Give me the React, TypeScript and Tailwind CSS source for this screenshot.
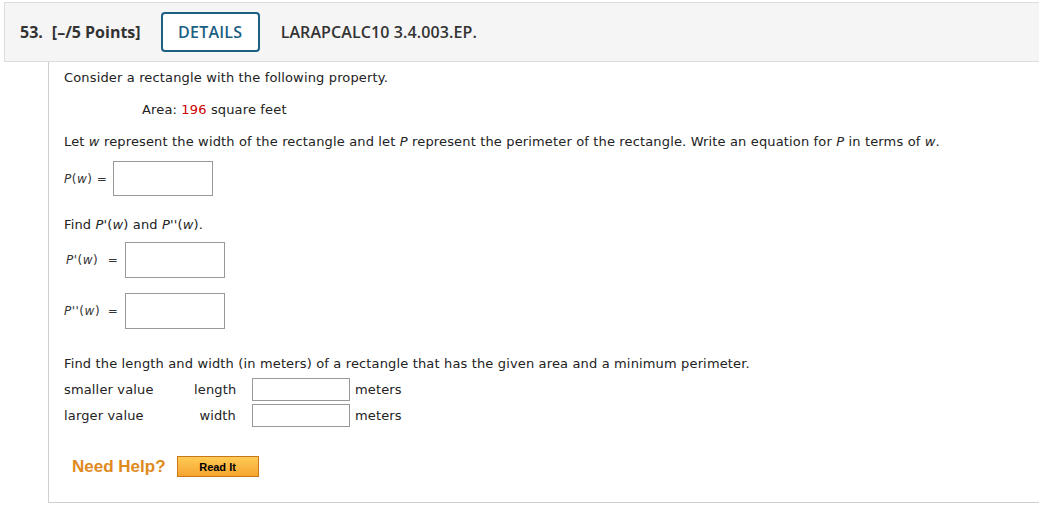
import React from 'react';

const body = "font-['DejaVu_Sans',Verdana,sans-serif] text-[13px] tracking-[0.15px] text-[#222]";

function Box({ className }: { className: string }) {
  return <div className={`border border-[#999] bg-white ${className}`} />;
}

function Label({ primes }: { primes: string }) {
  return (
    <span className="text-[12px] text-[#333] tracking-[0.5px]">
      <i>P</i>
      {primes}(<i>w</i>)
    </span>
  );
}

export default function App() {
  return (
    <div className={`min-h-screen bg-white ${body}`}>
      <div className="pt-[2px] pl-[4px]">
        {/* Question header */}
        <div className="flex items-center h-[60px] bg-[#f5f5f5] border border-r-0 border-[#dcdcdc] pl-[15px] font-['Open_Sans',sans-serif] font-bold text-[16px] tracking-normal text-[#333]">
          <span>53.</span>
          <span className="ml-[9px]">[–/5 Points]</span>
          <button className="ml-[20px] h-[40px] w-[99px] rounded-[4px] border-2 border-[#1b5f83] bg-white text-[#1b5f83] font-semibold text-[16px] tracking-[0.2px]">
            DETAILS
          </button>
          <span className="ml-[21px] font-semibold tracking-[0.1px]">LARAPCALC10 3.4.003.EP.</span>
        </div>

        {/* Question body */}
        <div className="ml-[44px] border-l border-b border-[#cfcfcf] pl-[15px] pt-[7px] pb-[22px]">
          <p className="leading-[18px]">Consider a rectangle with the following property.</p>
          <p className="mt-[14px] ml-[78px] leading-[18px]">
            Area: <span className="text-[#c00]">196</span> square feet
          </p>
          <p className="mt-[14px] leading-[18px]">
            Let <i>w</i> represent the width of the rectangle and let <i>P</i> represent the perimeter of the rectangle. Write an equation for <i>P</i> in terms of <i>w</i>.
          </p>

          <div className="mt-[10px] flex items-center">
            <span className="text-[12px] text-[#333] tracking-[0.5px] w-[49px]">
              <i>P</i>(<i>w</i>) =
            </span>
            <Box className="w-[100px] h-[35px]" />
          </div>

          <p className="mt-[20px] leading-[18px]">
            Find <i>P</i>'(<i>w</i>) and <i>P</i>''(<i>w</i>).
          </p>

          <div className="mt-[8px] flex items-center">
            <div className="w-[61px] flex justify-between pr-[7px] pl-[2px]">
              <Label primes="'" />
              <span className="text-[12px] text-[#333]">=</span>
            </div>
            <Box className="w-[100px] h-[36px]" />
          </div>

          <div className="mt-[15px] flex items-center">
            <div className="w-[61px] flex justify-between pr-[7px]">
              <Label primes="''" />
              <span className="text-[12px] text-[#333]">=</span>
            </div>
            <Box className="w-[100px] h-[36px]" />
          </div>

          <p className="mt-[26px] leading-[18px]">
            Find the length and width (in meters) of a rectangle that has the given area and a minimum perimeter.
          </p>

          <div className="mt-[5px] grid grid-cols-[130px_42px_100px_auto] items-center gap-y-[3px]">
            <span>smaller value</span>
            <span className="text-right">length</span>
            <Box className="ml-[16px] w-[98px] h-[23px]" />
            <span className="ml-[19px]">meters</span>
            <span>larger value</span>
            <span className="text-right">width</span>
            <Box className="ml-[16px] w-[98px] h-[23px]" />
            <span className="ml-[19px]">meters</span>
          </div>

          <div className="mt-[27px] ml-[8px] flex items-center">
            <span className="font-['Liberation_Sans',Arial,sans-serif] font-bold text-[17px] tracking-normal text-[#e08a1e]">
              Need Help?
            </span>
            <button className="ml-[11px] w-[82px] h-[21px] border border-[#c9771a] bg-gradient-to-b from-[#ffcb55] to-[#f5a52f] font-['Liberation_Sans',Arial,sans-serif] font-bold text-[11px] tracking-normal text-black">
              Read It
            </button>
          </div>
        </div>
      </div>
    </div>
  );
}
